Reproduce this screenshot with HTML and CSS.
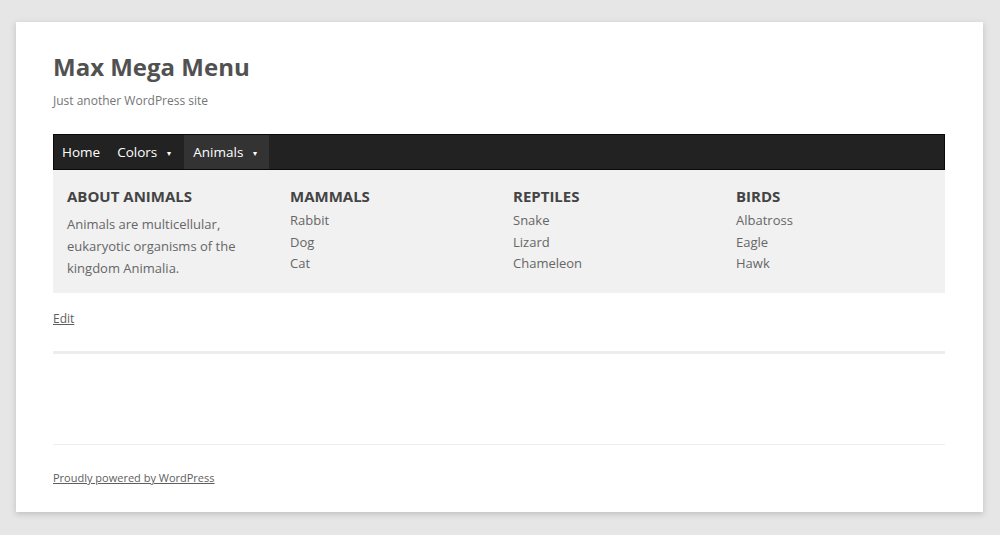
FILE: index.html
```html
<!DOCTYPE html>
<html>
<head>
<meta charset="utf-8">
<link rel="stylesheet" href="styles.css">
</head>
<body>
<div class="page">
  <header class="site-header">
    <h1 class="site-title">Max Mega Menu</h1>
    <p class="site-desc">Just another WordPress site</p>
  </header>
  <nav class="nav">
    <ul class="nav-bar">
      <li class="nav-item">Home</li>
      <li class="nav-item has-arrow">Colors<span class="arrow">▾</span></li>
      <li class="nav-item has-arrow active">Animals<span class="arrow">▾</span></li>
    </ul>
    <div class="mega">
      <div class="col">
        <h3 class="col-title">About Animals</h3>
        <p class="col-text">Animals are multicellular, eukaryotic organisms of the kingdom Animalia.</p>
      </div>
      <div class="col">
        <h3 class="col-title">Mammals</h3>
        <ul class="links"><li>Rabbit</li><li>Dog</li><li>Cat</li></ul>
      </div>
      <div class="col">
        <h3 class="col-title">Reptiles</h3>
        <ul class="links"><li>Snake</li><li>Lizard</li><li>Chameleon</li></ul>
      </div>
      <div class="col">
        <h3 class="col-title">Birds</h3>
        <ul class="links"><li>Albatross</li><li>Eagle</li><li>Hawk</li></ul>
      </div>
    </div>
  </nav>
  <div class="entry">
    <a class="edit" href="#">Edit</a>
  </div>
  <div class="sep"></div>
  <footer class="footer">
    <a href="#">Proudly powered by WordPress</a>
  </footer>
</div>
</body>
</html>
```
FILE: styles.css
```css
html, body {
  margin: 0;
  padding: 0;
}
body {
  background: #e6e6e6;
  font-family: "Open Sans", "Liberation Sans", sans-serif;
  color: #444;
  padding: 22px 17px 23px 16px;
}
.page {
  background: #fff;
  box-shadow: 0 2px 6px rgba(100, 100, 100, 0.3);
  padding: 0 38px 0 37px;
  height: 490px;
  box-sizing: border-box;
  overflow: hidden;
}
.site-header {
  padding-top: 27px;
}
.site-title {
  margin: 0;
  font-size: 24px;
  font-weight: 700;
  line-height: 36px;
  color: #515151;
}
.site-desc {
  margin: 7px 0 0;
  font-size: 12px;
  line-height: 18px;
  color: #757575;
}
.nav {
  margin-top: 24px;
}
.nav-bar {
  list-style: none;
  margin: 0;
  padding: 0;
  display: flex;
  background: #222;
  border: 1px solid #0a0a0a;
  height: 34px;
}
.nav-item {
  color: #fff;
  font-size: 13.5px;
  line-height: 34px;
  padding: 0 9px 0 8px;
}
.nav-item.has-arrow {
  padding-right: 13px;
}
.nav-item.active {
  background: #333;
  padding-left: 9px;
  padding-right: 12px;
}
.arrow {
  display: inline-block;
  font-size: 8px;
  margin-left: 10px;
  position: relative;
  top: -1px;
}
.mega {
  background: #f1f1f1;
  display: grid;
  grid-template-columns: repeat(4, 1fr);
  padding: 16px 0 14px 0;
}
.col {
  padding-left: 14px;
  padding-right: 10px;
}
.col-title {
  margin: 0 0 4px;
  font-size: 15px;
  font-weight: 700;
  text-transform: uppercase;
  line-height: 20px;
  color: #444;
}
.col-text {
  margin: 0;
  font-size: 13px;
  line-height: 22px;
  color: #666;
  padding-top: 3px;
}
.links {
  list-style: none;
  margin: 0;
  padding: 0;
}
.links li {
  font-size: 13px;
  line-height: 21.5px;
  color: #666;
}
.entry {
  padding: 13px 0 23px;
}
.edit {
  font-size: 12px;
  color: #5e5e5e;
  line-height: 18px;
}
.sep {
  height: 3px;
  background: #ededed;
}
.footer {
  margin-top: 90px;
  border-top: 1px solid #ededed;
  padding-top: 20px;
}
.footer a {
  font-size: 11px;
  color: #5e5e5e;
  line-height: 18px;
}
```
